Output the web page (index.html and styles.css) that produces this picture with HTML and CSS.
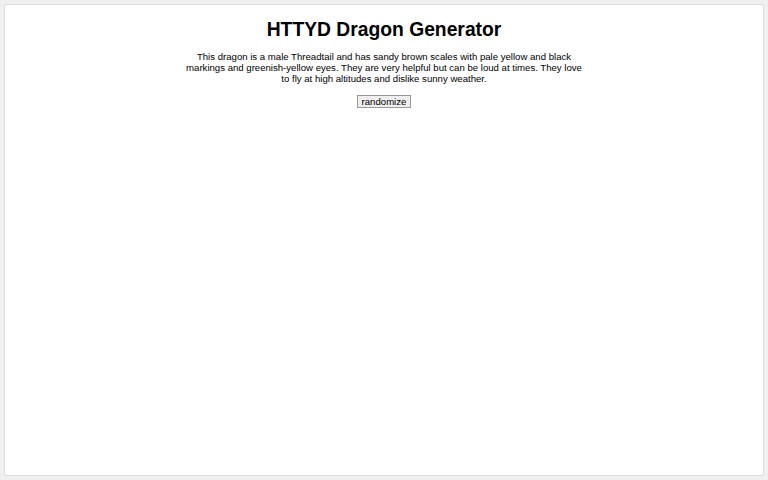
FILE: index.html
```html
<!DOCTYPE html>
<html lang="en">
<head>
    <meta charset="UTF-8">
    <meta name="viewport" content="width=device-width, initial-scale=1.0">
    <title>HTTYD Dragon Generator</title>
    <link rel="stylesheet" href="styles.css">
</head>
<body>
    <div class="page">
        <h1>HTTYD Dragon Generator</h1>
        <p class="description" id="description">This dragon is a male Threadtail and has sandy brown scales with pale yellow and black markings and greenish-yellow eyes. They are very helpful but can be loud at times. They love to fly at high altitudes and dislike sunny weather.</p>
        <button class="randomize" id="randomize">randomize</button>
    </div>
</body>
</html>
```

FILE: styles.css
```css
body {
    font-family: "Liberation Sans", Arial, sans-serif;
    margin: 0;
    padding: 4px;
    background: #f0f0f0;
    height: 480px;
    box-sizing: border-box;
}

.page {
    background: white;
    border: 1px solid #dcdcdc;
    height: 100%;
    box-sizing: border-box;
    text-align: center;
    padding-top: 14px;
}

h1 {
    font-size: 19.3px;
    margin: 0 0 10px;
    color: #000;
}

.description {
    font-size: 9.6px;
    line-height: 11px;
    max-width: 400px;
    margin: 0 auto 7px;
    color: #000;
}

.randomize {
    font-family: inherit;
    font-size: 9.6px;
    line-height: 11px;
    padding: 0 4px;
    border: 1px solid #999;
    background: #efefef;
    color: #000;
    border-radius: 0;
}
```
